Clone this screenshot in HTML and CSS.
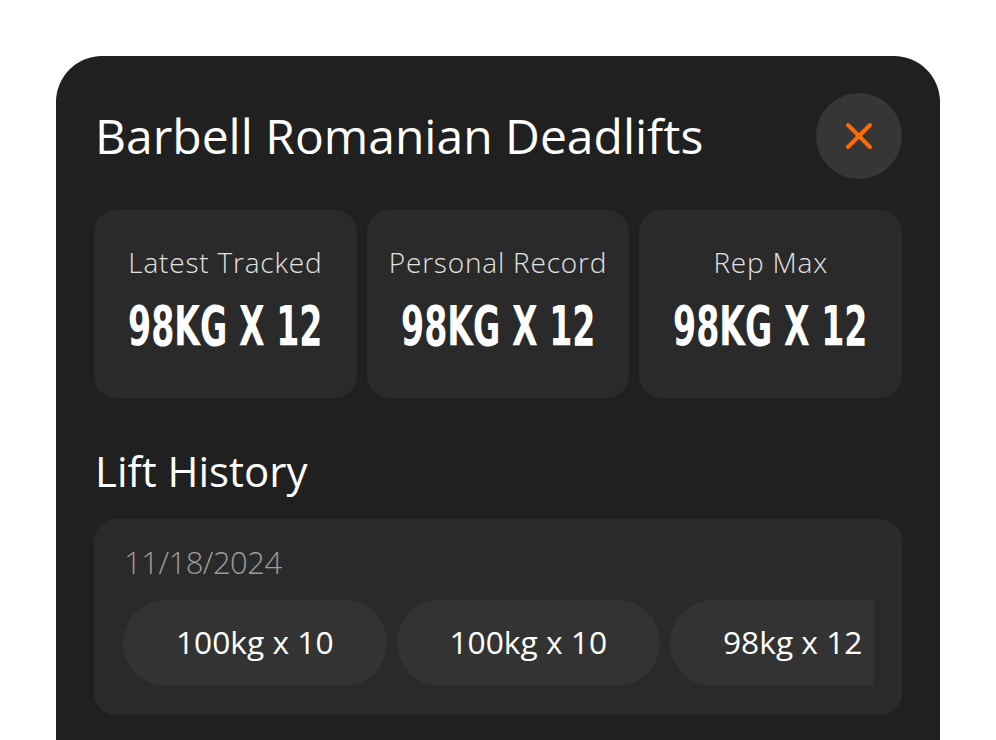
FILE: index.html
```html
<!DOCTYPE html>
<html lang="en">
<head>
<meta charset="utf-8">
<link rel="stylesheet" href="styles.css">
</head>
<body>
<div class="sheet">
  <div class="header">
    <h1 class="title">Barbell Romanian Deadlifts</h1>
    <button class="close" aria-label="Close">
      <svg width="28" height="28" viewBox="0 0 28 28"><path d="M3 3 L25 25 M25 3 L3 25" stroke="#ff6a00" stroke-width="4" stroke-linecap="round" fill="none"/></svg>
    </button>
  </div>
  <div class="stats">
    <div class="stat"><div class="label">Latest Tracked</div><div class="value"><span>98KG X 12</span></div></div>
    <div class="stat"><div class="label">Personal Record</div><div class="value"><span>98KG X 12</span></div></div>
    <div class="stat"><div class="label">Rep Max</div><div class="value"><span>98KG X 12</span></div></div>
  </div>
  <h2 class="section">Lift History</h2>
  <div class="history">
    <div class="date">11/18/2024</div>
    <div class="pills">
      <div class="pill">100kg x 10</div>
      <div class="pill">100kg x 10</div>
      <div class="pill">98kg x 12</div>
    </div>
  </div>
</div>
</body>
</html>
```
FILE: styles.css
```css
html, body { margin: 0; padding: 0; background: #fff; }
body { padding: 56px 56px 0; font-family: "Open Sans", "Noto Sans", sans-serif; overflow: hidden; height: 740px; box-sizing: border-box; }
.sheet {
  background: #202020;
  border-radius: 46px 46px 0 0;
  padding: 37px 38px 40px;
  min-height: 760px;
  box-sizing: border-box;
}
.header { display: flex; align-items: center; justify-content: space-between; }
.title { margin: 0; color: #fff; font-weight: 400; font-size: 48px; letter-spacing: 0; padding-left: 1px; line-height: 60px; white-space: nowrap; }
.close {
  flex: none;
  width: 86px; height: 86px; border-radius: 50%; border: 0; background: #363636;
  display: flex; align-items: center; justify-content: center; padding: 0;
}
.stats { display: grid; grid-template-columns: repeat(3, minmax(0, 1fr)); gap: 10px; margin-top: 31px; }
.stat {
  background: #2a2a2a; border-radius: 22px; height: 188px; box-sizing: border-box; padding-bottom: 7px;
  display: flex; flex-direction: column; align-items: center; justify-content: center; gap: 17px;
  overflow: hidden;
}
.label { color: #e2e2e2; font-size: 28px; font-weight: 300; line-height: 34px; letter-spacing: 0.8px; white-space: nowrap; }
.value { color: #fff; font-family: "DejaVu Sans Condensed", "DejaVu Sans", sans-serif; font-weight: 700; font-size: 56px; line-height: 60px; white-space: nowrap; }
.value span { display: inline-block; transform: scaleX(0.66); }
.section { margin: 43px 0 0 1px; color: #fff; font-weight: 400; font-size: 42px; line-height: 60px; letter-spacing: 0; }
.history {
  margin-top: 18px; background: #2a2a2a; border-radius: 22px;
  padding: 24px 28px 29px 29px;
}
.date { color: #9c9c9c; font-size: 31px; font-weight: 300; line-height: 38px; letter-spacing: -0.5px; padding-left: 1px; }
.pills { display: flex; gap: 10px; overflow: hidden; margin-top: 19px; }
.pill {
  flex: none; background: #333; border-radius: 43px; height: 86px; box-sizing: border-box;
  padding: 0 53px 3px; display: flex; align-items: center; color: #fff; font-size: 31.7px;
}
```
